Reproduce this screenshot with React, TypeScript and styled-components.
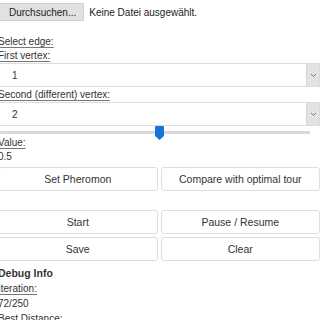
import React from 'react';
import styled, { createGlobalStyle } from 'styled-components';

const GlobalStyle = createGlobalStyle`
    html, body {
        margin: 0;
        padding: 0;
        background: #ffffff;
        overflow: hidden;
    }
    body {
        font-family: "Liberation Sans", Arial, sans-serif;
        font-size: 10px;
        color: #333333;
    }
`;

const Page = styled.div`
    width: 322px;
    margin-left: -2px;
    padding-top: 3px;
`;

const FileRow = styled.div`
    display: flex;
    align-items: center;
    gap: 5px;
    height: 18px;
`;

const FileButton = styled.div`
    box-sizing: border-box;
    height: 18px;
    padding: 0 7px 0 10px;
    display: flex;
    align-items: center;
    background: #e1e1e1;
    border: 1px solid #d0d0d0;
    color: #222;
    font-size: 10px;
`;

const FileName = styled.span`
    color: #222;
`;

const Label = styled.div<{ $top?: number; $lh?: number }>`
    margin-top: ${({ $top }) => $top ?? 0}px;
    line-height: ${({ $lh }) => $lh ?? 14}px;
    text-decoration: underline;
    text-decoration-color: #777;
    text-underline-offset: 2px;
    color: #333;
`;

const Plain = styled.div<{ $lh?: number }>`
    line-height: ${({ $lh }) => $lh ?? 14}px;
    color: #333;
`;

const SelectBox = styled.div`
    box-sizing: border-box;
    height: 24px;
    display: flex;
    align-items: stretch;
    border: 1px solid #dcdcdc;
    background: #fff;
    margin-bottom: 1px;
`;

const SelectValue = styled.div`
    flex: 1;
    display: flex;
    align-items: center;
    padding-left: 13px;
    color: #333;
`;

const ArrowBox = styled.div`
    width: 12px;
    display: flex;
    align-items: center;
    justify-content: center;
    background: #e3e3e3;
    border-left: 1px solid #d8d8d8;
`;

const SliderWrap = styled.div`
    position: relative;
    height: 9px;
`;

const Track = styled.div`
    position: absolute;
    left: 2px;
    right: 10px;
    top: 4px;
    height: 3px;
    background: #d9d9d9;
    border-radius: 1px;
`;

const Thumb = styled.svg`
    position: absolute;
    top: -1px;
    left: 157px;
`;

const ButtonGrid = styled.div<{ $top: number }>`
    display: grid;
    grid-template-columns: 1fr 1fr;
    column-gap: 3px;
    row-gap: 3px;
    margin-top: ${({ $top }) => $top}px;
`;

const Button = styled.div`
    box-sizing: border-box;
    height: 24px;
    display: flex;
    align-items: center;
    justify-content: center;
    border: 1px solid #dedede;
    border-radius: 3px;
    background: #fff;
    color: #333;
    font-size: 10.5px;
`;

const DebugTitle = styled.div`
    margin-top: 5px;
    font-weight: bold;
    font-size: 10.5px;
    line-height: 15px;
    color: #333;
`;

const Chevron = () => (
    <svg width="7" height="5" viewBox="0 0 7 5">
        <path d="M1 1 L3.5 3.5 L6 1" fill="none" stroke="#777" strokeWidth="1" />
    </svg>
);

const Select = ({ value }: { value: string }) => (
    <SelectBox>
        <SelectValue>{value}</SelectValue>
        <ArrowBox>
            <Chevron />
        </ArrowBox>
    </SelectBox>
);

const App = () => {
    return (
        <Page>
            <GlobalStyle />
            <FileRow>
                <FileButton>Durchsuchen...</FileButton>
                <FileName>Keine Datei ausgewählt.</FileName>
            </FileRow>
            <Label $top={14}>Select edge:</Label>
            <Label>First vertex:</Label>
            <Select value="1" />
            <Label>Second (different) vertex:</Label>
            <Select value="2" />
            <SliderWrap>
                <Track />
                <Thumb width="9" height="14" viewBox="0 0 9 14">
                    <path d="M1 0 H8 Q9 0 9 1 V10 L4.5 14 L0 10 V1 Q0 0 1 0 Z" fill="#1a73d6" />
                </Thumb>
            </SliderWrap>
            <Label>Value:</Label>
            <Plain>0.5</Plain>
            <ButtonGrid $top={3}>
                <Button>Set Pheromon</Button>
                <Button>Compare with optimal tour</Button>
            </ButtonGrid>
            <ButtonGrid $top={19}>
                <Button>Start</Button>
                <Button>Pause / Resume</Button>
                <Button>Save</Button>
                <Button>Clear</Button>
            </ButtonGrid>
            <DebugTitle>Debug Info</DebugTitle>
            <Label $lh={15}>Iteration:</Label>
            <Plain $lh={15}>72/250</Plain>
            <Label $lh={15}>Best Distance:</Label>
        </Page>
    );
};

export default App;
